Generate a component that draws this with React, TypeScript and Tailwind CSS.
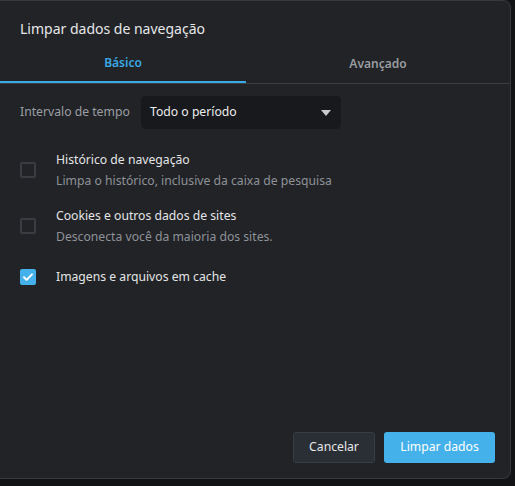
import React from 'react';

const font = { fontFamily: '"Noto Sans", "Open Sans", sans-serif' };

function Checkbox({ checked }: { checked?: boolean }) {
  if (checked) {
    return (
      <span className="flex h-[16px] w-[16px] shrink-0 items-center justify-center rounded-[2px] bg-[#45b1ea]">
        <svg width="12" height="12" viewBox="0 0 12 12" fill="none">
          <path d="M2 6.3l2.6 2.6L10 3.4" stroke="#fff" strokeWidth="2" strokeLinecap="round" strokeLinejoin="round" />
        </svg>
      </span>
    );
  }
  return <span className="h-[16px] w-[16px] shrink-0 rounded-[2px] border-2 border-[#393c41]" />;
}

interface Option {
  title: string;
  desc?: string;
  checked?: boolean;
  gap: string;
}

const options: Option[] = [
  { title: 'Histórico de navegação', desc: 'Limpa o histórico, inclusive da caixa de pesquisa', gap: 'mt-[20px]' },
  { title: 'Cookies e outros dados de sites', desc: 'Desconecta você da maioria dos sites.', gap: 'mt-[14px]' },
  { title: 'Imagens e arquivos em cache', checked: true, gap: 'mt-[19px]' },
];

export default function App() {
  return (
    <div className="h-[486px] w-[515px] bg-[#121315]" style={font}>
      <div className="flex h-[479px] w-[511px] flex-col rounded-r-lg border-y border-r border-[#35383d] bg-[#212327]">
        <div className="px-5 pt-[17px] text-[14px] leading-[22px] text-[#e6e7e8]">Limpar dados de navegação</div>

        <div className="flex border-b border-[#3a3d42]">
          <div className="flex h-[43px] w-[246px] items-center justify-center border-b-2 border-[#3aa9e4] pt-[5px] text-[12px] font-semibold text-[#3aa9e4]">
            Básico
          </div>
          <div className="flex h-[43px] flex-1 items-center justify-center pt-[5px] text-[12px] font-semibold text-[#9a9ca0]">
            Avançado
          </div>
        </div>

        <div className="mt-3 flex items-center px-5">
          <span className="w-[121px] text-[12.2px] text-[#9b9ea3]">Intervalo de tempo</span>
          <div className="flex h-[33px] w-[200px] items-center justify-between rounded-[5px] bg-[#17191c] pl-[9px] pr-[10px]">
            <span className="text-[12.2px] text-[#eceded]">Todo o período</span>
            <svg width="10" height="6" viewBox="0 0 10 6">
              <path d="M0 0h10L5 6z" fill="#c9cacc" />
            </svg>
          </div>
        </div>

        {options.map((o) => (
          <div key={o.title} className={`${o.gap} flex items-center px-5`}>
            <Checkbox checked={o.checked} />
            <div className="ml-[20px] text-[12.2px] leading-[21px]">
              <div className="text-[#e4e5e6]">{o.title}</div>
              {o.desc && <div className="text-[#8f9297]">{o.desc}</div>}
            </div>
          </div>
        ))}

        <div className="mt-auto flex justify-end gap-[9px] pb-[15px] pl-4 pr-[15px]">
          <button className="h-[31px] w-[82px] rounded-[3px] border border-[#383d44] bg-[#2a2f36] text-[12.2px] text-[#e6e7e8]">
            Cancelar
          </button>
          <button className="h-[31px] w-[111px] rounded-[3px] bg-[#45b1ea] text-[12.2px] text-white">
            Limpar dados
          </button>
        </div>
      </div>
    </div>
  );
}
